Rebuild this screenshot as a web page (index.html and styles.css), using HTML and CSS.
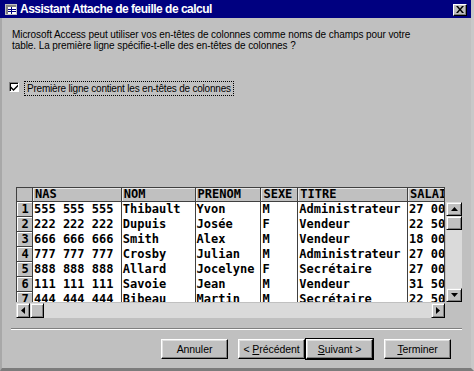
FILE: index.html
```html
<!DOCTYPE html>
<html lang="fr">
<head>
<meta charset="utf-8">
<link rel="stylesheet" href="styles.css">
</head>
<body>
<div class="window">
  <div class="titlebar">
    <svg class="app-icon" width="12" height="11" viewBox="0 0 12 11">
      <rect x="0.5" y="0.5" width="11" height="10" fill="#fff" stroke="#c0c0c0"/>
      <rect x="1" y="1" width="10" height="2" fill="#808080"/>
      <rect x="1" y="1" width="2" height="9" fill="#808080"/>
      <line x1="3" y1="5.5" x2="11" y2="5.5" stroke="#000080"/>
      <line x1="3" y1="7.5" x2="11" y2="7.5" stroke="#000080"/>
      <line x1="6.5" y1="3" x2="6.5" y2="10" stroke="#000080"/>
    </svg>
    <span class="title">Assistant Attache de feuille de calcul</span>
    <span class="close"><svg width="8" height="7" viewBox="0 0 8 7"><path d="M0 0h2l2 2.5L6 0h2L5 3.5 8 7H6L4 4.5 2 7H0l3-3.5z" fill="#000"/></svg></span>
  </div>
  <div class="content">
    <p class="intro">Microsoft Access peut utiliser vos en-têtes de colonnes comme noms de champs pour votre<br>table. La première ligne spécifie-t-elle des en-têtes de colonnes ?</p>
    <div class="check-row">
      <span class="checkbox"><svg width="7" height="7" viewBox="0 0 7 7"><path d="M0 2.5l2.5 2.5L7 0.5v2L2.5 7 0 4.5z" fill="#000"/></svg></span>
      <span class="check-label">Première ligne contient les en-têtes de colonnes</span>
    </div>

    <div class="grid-area">
      <div class="sheet">
        <div class="row head">
          <div class="sel corner"></div>
          <div class="cell c-nas">NAS</div>
          <div class="cell c-nom">NOM</div>
          <div class="cell c-pre">PRENOM</div>
          <div class="cell c-sex">SEXE</div>
          <div class="cell c-tit">TITRE</div>
          <div class="cell c-sal">SALAIRE</div>
        </div>
        <div class="rows">
          <div class="row"><div class="sel">1</div><div class="cell c-nas">555 555 555</div><div class="cell c-nom">Thibault</div><div class="cell c-pre">Yvon</div><div class="cell c-sex">M</div><div class="cell c-tit">Administrateur</div><div class="cell c-sal">27 000</div></div>
          <div class="row"><div class="sel">2</div><div class="cell c-nas">222 222 222</div><div class="cell c-nom">Dupuis</div><div class="cell c-pre">Josée</div><div class="cell c-sex">F</div><div class="cell c-tit">Vendeur</div><div class="cell c-sal">22 500</div></div>
          <div class="row"><div class="sel">3</div><div class="cell c-nas">666 666 666</div><div class="cell c-nom">Smith</div><div class="cell c-pre">Alex</div><div class="cell c-sex">M</div><div class="cell c-tit">Vendeur</div><div class="cell c-sal">18 000</div></div>
          <div class="row"><div class="sel">4</div><div class="cell c-nas">777 777 777</div><div class="cell c-nom">Crosby</div><div class="cell c-pre">Julian</div><div class="cell c-sex">M</div><div class="cell c-tit">Administrateur</div><div class="cell c-sal">27 000</div></div>
          <div class="row"><div class="sel">5</div><div class="cell c-nas">888 888 888</div><div class="cell c-nom">Allard</div><div class="cell c-pre">Jocelyne</div><div class="cell c-sex">F</div><div class="cell c-tit">Secrétaire</div><div class="cell c-sal">27 000</div></div>
          <div class="row"><div class="sel">6</div><div class="cell c-nas">111 111 111</div><div class="cell c-nom">Savoie</div><div class="cell c-pre">Jean</div><div class="cell c-sex">M</div><div class="cell c-tit">Vendeur</div><div class="cell c-sal">31 500</div></div>
          <div class="row"><div class="sel">7</div><div class="cell c-nas">444 444 444</div><div class="cell c-nom">Bibeau</div><div class="cell c-pre">Martin</div><div class="cell c-sex">M</div><div class="cell c-tit">Secrétaire</div><div class="cell c-sal">22 500</div></div>
        </div>
      </div>
      <div class="vscroll">
        <span class="sbtn"><svg width="7" height="4" viewBox="0 0 7 4"><path d="M3.5 0L7 4H0z" fill="#000"/></svg></span>
        <span class="sbtn"></span>
        <span class="track"></span>
        <span class="sbtn"><svg width="7" height="4" viewBox="0 0 7 4"><path d="M0 0h7L3.5 4z" fill="#000"/></svg></span>
      </div>
      <div class="hscroll">
        <span class="sbtn"><svg width="4" height="7" viewBox="0 0 4 7"><path d="M4 0v7L0 3.5z" fill="#000"/></svg></span>
        <span class="sbtn"></span>
        <span class="track"></span>
        <span class="sbtn"><svg width="4" height="7" viewBox="0 0 4 7"><path d="M0 0l4 3.5L0 7z" fill="#000"/></svg></span>
      </div>
    </div>

    <div class="separator"></div>

    <div class="buttons">
      <span class="btn"><span>Annuler</span></span>
      <span class="btn"><span>&lt; <u>P</u>récédent</span></span>
      <span class="btn default"><span><u>S</u>uivant &gt;</span></span>
      <span class="btn"><span><u>T</u>erminer</span></span>
    </div>
  </div>
</div>
</body>
</html>
```

FILE: styles.css
```css
* { box-sizing: border-box; }
html, body { margin: 0; padding: 0; }
body {
  width: 474px;
  height: 371px;
  overflow: hidden;
  background: #c0c0c0;
  font-family: "Liberation Sans", Arial, sans-serif;
  font-size: 10px;
  letter-spacing: -0.08px;
  color: #000;
}
.window {
  width: 474px;
  height: 371px;
  background: #c0c0c0;
  border-left: 2px solid #a8a8a8;
  border-right: 3px solid #c8c8c8;
  border-bottom: 3px solid #7c7c7c;
  display: flex;
  flex-direction: column;
}
.titlebar {
  height: 18px;
  margin-left: -2px;
  background: #000080;
  display: flex;
  align-items: center;
  padding: 0 4px 0 5px;
  color: #fff;
}
.app-icon { flex: none; }
.title {
  margin-left: 3px;
  font-family: "Liberation Sans Narrow", "Liberation Sans", Arial, sans-serif;
  font-weight: bold;
  font-size: 12px;
  letter-spacing: -0.5px;
  white-space: nowrap;
  flex: 1;
}
.close {
  width: 14px;
  height: 12px;
  margin-top: 1px;
  background: #c0c0c0;
  border-top: 1px solid #fff;
  border-left: 1px solid #fff;
  border-right: 1px solid #000;
  border-bottom: 1px solid #000;
  box-shadow: inset -1px -1px #808080;
  display: flex;
  align-items: center;
  justify-content: center;
}
.content {
  flex: 1;
  display: flex;
  flex-direction: column;
  padding-left: 8px;
}
.intro {
  margin: 11px 0 0 2px;
  line-height: 11px;
  white-space: nowrap;
}
.check-row {
  margin-top: 30px;
  display: flex;
  align-items: flex-start;
  height: 15px;
}
.checkbox {
  width: 10px;
  height: 10px;
  margin: 1px 0 0 -1px;
  background: #fff;
  border-top: 1px solid #808080;
  border-left: 1px solid #808080;
  border-right: 1px solid #fff;
  border-bottom: 1px solid #fff;
  box-shadow: inset 1px 1px #000;
  display: flex;
  align-items: center;
  justify-content: center;
  padding: 1px 0 0 1px;
}
.check-label {
  margin-left: 5px;
  padding: 0 2px;
  height: 15px;
  line-height: 13px;
  letter-spacing: -0.2px;
  outline: 1px dotted #000;
  outline-offset: -1px;
  border: 1px solid transparent;
  white-space: nowrap;
}

.grid-area {
  margin-top: 91px;
  margin-left: 6px;
  display: grid;
  grid-template-columns: 429px 17px;
  grid-template-rows: 15px 100px 16px;
  width: 446px;
}
.sheet {
  grid-column: 1;
  grid-row: 1 / 3;
  border-top: 1px solid #404040;
  border-left: 1px solid #404040;
  font-family: "DejaVu Sans Mono", "Liberation Mono", monospace;
  font-weight: bold;
  font-size: 12px;
  letter-spacing: 0;
  display: flex;
  flex-direction: column;
  overflow: hidden;
  background: #fff;
}
.row {
  display: flex;
  flex: 1;
  min-height: 0;
}
.head {
  flex: none;
  height: 14px;
  background: #c0c0c0;
}
.rows {
  flex: 1;
  display: flex;
  flex-direction: column;
}
.cell {
  border-right: 1px solid #404040;
  padding-left: 1px;
  white-space: nowrap;
  overflow: hidden;
  line-height: 14px;
}
.head .cell {
  padding-left: 2px;
  line-height: 13px;
  border-bottom: 1px solid #404040;
  box-shadow: inset 1px 1px #e8e8e8;
}
.sel {
  width: 16px;
  flex: none;
  background: #c0c0c0;
  border-right: 1px solid #404040;
  border-bottom: 1px solid #404040;
  box-shadow: inset 1px 1px #fff;
  text-align: center;
  padding-left: 1px;
  line-height: 14px;
}
.corner { box-shadow: none; }
.c-nas { width: 89px; }
.c-nom { width: 74px; }
.c-pre { width: 66px; }
.c-sex { width: 37px; }
.c-tit { width: 110px; }
.c-sal { width: 37px; }

.sbtn {
  display: flex;
  align-items: center;
  justify-content: center;
  background: #c0c0c0;
  border-top: 1px solid #dfdfdf;
  border-left: 1px solid #dfdfdf;
  border-right: 1px solid #000;
  border-bottom: 1px solid #000;
  box-shadow: inset 1px 1px #fff, inset -1px -1px #808080;
  flex: none;
}
.track { flex: 1; background: #dadada; }
.vscroll {
  grid-column: 2;
  grid-row: 2;
  display: flex;
  flex-direction: column;
  margin-left: 1px;
}
.vscroll .sbtn { height: 14px; width: 16px; }
.hscroll {
  grid-column: 1;
  grid-row: 3;
  display: flex;
  padding-top: 1px;
}
.hscroll .sbtn { width: 14px; height: 15px; }

.separator {
  margin: 10px 9px 0 1px;
  height: 2px;
  border-top: 1px solid #808080;
  border-bottom: 1px solid #fff;
}
.buttons {
  display: flex;
  justify-content: flex-end;
  padding-right: 20px;
  margin-top: 9px;
}
.btn {
  width: 67px;
  height: 20px;
  display: flex;
  align-items: center;
  justify-content: center;
  font-size: 10.5px;
  background: #c0c0c0;
  border-top: 1px solid #fff;
  border-left: 1px solid #fff;
  border-right: 1px solid #000;
  border-bottom: 1px solid #000;
  box-shadow: inset -1px -1px #808080, inset 1px 1px #dfdfdf;
  white-space: nowrap;
}
.btn + .btn { margin-left: 10px; }
.btn.default { margin-left: 1px; outline: 1px solid #000; }
.btn.default + .btn { margin-left: 11px; }
u { text-decoration: underline; text-underline-offset: 1px; }
```
